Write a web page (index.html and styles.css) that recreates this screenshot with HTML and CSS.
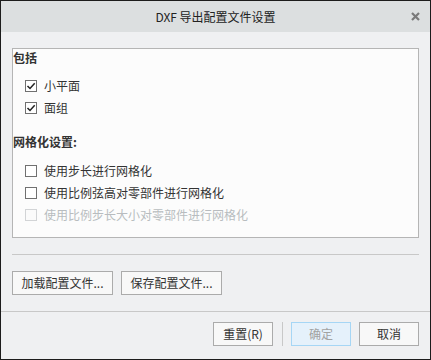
FILE: index.html
```html
<!DOCTYPE html>
<html lang="zh-CN">
<head>
<meta charset="utf-8">
<title>DXF 导出配置文件设置</title>
<link rel="stylesheet" href="styles.css">
</head>
<body>
<div class="window">
  <div class="titlebar">
    <span class="title">DXF 导出配置文件设置</span>
    <span class="close"><svg width="9" height="9" viewBox="0 0 9 9"><path d="M1 1 L8 8 M8 1 L1 8" stroke="#7a7a7a" stroke-width="2.2" fill="none"/></svg></span>
  </div>
  <div class="content">
    <div class="group">
      <div class="label label-first">包括</div>
      <div class="rows">
        <div class="row"><span class="box"><svg width="10" height="10" viewBox="0 0 10 10"><path d="M1.5 5 L4 7.5 L8.7 2.2" stroke="#222" stroke-width="1.5" fill="none"/></svg></span><span>小平面</span></div>
        <div class="row"><span class="box"><svg width="10" height="10" viewBox="0 0 10 10"><path d="M1.5 5 L4 7.5 L8.7 2.2" stroke="#222" stroke-width="1.5" fill="none"/></svg></span><span>面组</span></div>
      </div>
      <div class="label label-second">网格化设置:</div>
      <div class="rows">
        <div class="row"><span class="box"></span><span>使用步长进行网格化</span></div>
        <div class="row"><span class="box"></span><span>使用比例弦高对零部件进行网格化</span></div>
        <div class="row disabled"><span class="box"></span><span>使用比例步长大小对零部件进行网格化</span></div>
      </div>
    </div>
    <div class="sep"></div>
    <div class="filebtns">
      <button class="btn wide">加载配置文件...</button>
      <button class="btn wide">保存配置文件...</button>
    </div>
  </div>
  <div class="fullsep"></div>
  <div class="footer">
    <button class="btn small">重置(R)</button>
    <span class="vsep"></span>
    <button class="btn small primary">确定</button>
    <button class="btn small">取消</button>
  </div>
</div>
</body>
</html>
```
FILE: styles.css
```css
* { box-sizing: border-box; }
html, body { margin: 0; padding: 0; }
body {
  font-family: "Noto Sans CJK SC", "Noto Sans", sans-serif;
  font-size: 12px;
  color: #333;
  background: #eff0f2;
}
.window {
  width: 431px;
  height: 360px;
  border: 1px solid #1c1c1c;
  background: #eff0f2;
  display: flex;
  flex-direction: column;
}
.titlebar {
  height: 31px;
  background: #dcdfe0;
  display: flex;
  align-items: center;
  justify-content: center;
  position: relative;
  color: #222;
}
.title { font-size: 12px; line-height: 16px; }
.close {
  position: absolute;
  right: 10px;
  top: 11px;
  width: 9px;
  height: 9px;
  display: flex;
}
.content {
  padding: 16px 11px 0 11px;
}
.group {
  height: 190px;
  border: 1px solid #b5b5b5;
  background: #fcfcfc;
  padding: 0 0 0 0;
}
.label {
  font-weight: bold;
  line-height: 18px;
  height: 18px;
  color: #333;
}
.label-first { margin-bottom: 8px; }
.label-second { margin-top: 14px; margin-bottom: 9px; }
.row {
  height: 22px;
  display: flex;
  align-items: center;
  padding-left: 12px;
  line-height: 16px;
}
.box {
  width: 12px;
  height: 12px;
  border: 1px solid #707070;
  background: #fff;
  margin-right: 7px;
  display: flex;
  align-items: center;
  justify-content: center;
}
.disabled { color: #b8bcbf; }
.disabled .box { border-color: #d2d4d6; background: #fbfbfb; }
.sep {
  height: 1px;
  background: #c8c8c8;
  margin-top: 16px;
}
.filebtns {
  display: flex;
  gap: 8px;
  margin-top: 16px;
}
.btn {
  font-family: "Noto Sans CJK SC", "Noto Sans", sans-serif;
  font-size: 12px;
  color: #333;
  height: 24px;
  border: 1px solid #ababab;
  background: #f8f8f8;
  padding: 0;
  margin: 0;
  line-height: 16px;
}
.wide { width: 101px; }
.small { width: 60px; }
.fullsep {
  height: 1px;
  background: #c8c8c8;
  margin-top: 16px;
}
.footer {
  display: flex;
  justify-content: flex-end;
  align-items: center;
  gap: 8px;
  padding: 10px 11px 0 0;
}
.vsep {
  width: 1px;
  height: 24px;
  background: #c8c8c8;
  margin-left: 1px;
}
.primary {
  background: #e5f1fb;
  border-color: #a6d6f5;
  color: #a2a2a2;
}
```
